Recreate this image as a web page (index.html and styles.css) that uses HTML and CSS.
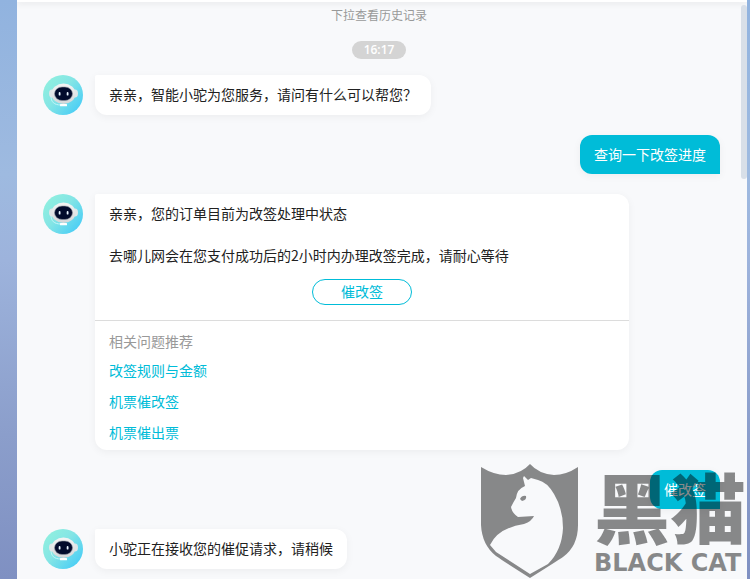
FILE: index.html
```
<!DOCTYPE html>
<html lang="zh-CN">
<head>
  <meta charset="UTF-8">
  <meta name="viewport" content="width=device-width, initial-scale=1.0">
  <title>智能小驼</title>
  <link rel="stylesheet" href="styles.css">
</head>
<body>
  <!-- Shared robot avatar -->
  <svg class="defs" width="0" height="0" aria-hidden="true">
    <defs>
      <linearGradient id="avatarBg" x1="0.1" y1="0.2" x2="0.9" y2="0.9">
        <stop offset="0" stop-color="#8eeee0"/>
        <stop offset="0.4" stop-color="#84e5e5"/>
        <stop offset="1" stop-color="#48cdf6"/>
      </linearGradient>
      <linearGradient id="helmet" x1="0" y1="0" x2="0" y2="1">
        <stop offset="0" stop-color="#f4f4f4"/>
        <stop offset="1" stop-color="#d3d6d8"/>
      </linearGradient>
      <symbol id="robot" viewBox="0 0 40 40">
        <circle cx="20" cy="20" r="20" fill="url(#avatarBg)"/>
        <path d="M8 21c0 6 3 9 10 9" fill="none" stroke="#c4f5f8" stroke-width="1"/>
        <ellipse cx="9" cy="18.500" rx="3" ry="4" fill="#dfe6e8"/>
        <ellipse cx="32" cy="18.500" rx="3" ry="4" fill="#dfe6e8"/>
        <ellipse cx="20.500" cy="18.800" rx="12" ry="10.200" fill="url(#helmet)"/>
        <rect x="11.500" y="12" width="18" height="13.500" rx="7.500" ry="6.700" fill="#020b2c" stroke="#8d939f" stroke-width="0.600"/>
        <rect x="15.700" y="17" width="1.800" height="3.600" rx="0.900" fill="#e8f4ff"/>
        <rect x="23.700" y="17" width="1.800" height="3.600" rx="0.900" fill="#e8f4ff"/>
        <rect x="17" y="29" width="7" height="2.200" rx="0.500" fill="#fff"/>
      </symbol>
    </defs>
  </svg>

  <main class="chat">
    <div class="chat-header"></div>
    <div class="scrollbar"></div>

    <div class="messages">
      <div class="history">下拉查看历史记录</div>
      <time class="time">16:17</time>

      <div class="row">
        <svg class="avatar"><use href="#robot"/></svg>
        <div class="bubble">亲亲，智能小驼为您服务，请问有什么可以帮您？</div>
      </div>

      <div class="row mine">
        <div class="bubble">查询一下改签进度</div>
      </div>

      <div class="row">
        <svg class="avatar"><use href="#robot"/></svg>
        <div class="card">
          <div class="card-body">
            <p>亲亲，您的订单目前为改签处理中状态</p>
            <p>去哪儿网会在您支付成功后的2小时内办理改签完成，请耐心等待</p>
            <button class="urge" type="button">催改签</button>
          </div>
          <div class="related">
            <div class="related-title">相关问题推荐</div>
            <a href="#">改签规则与金额</a>
            <a href="#">机票催改签</a>
            <a href="#">机票催出票</a>
          </div>
        </div>
      </div>

      <div class="row mine">
        <div class="bubble">催改签</div>
      </div>

      <div class="row">
        <svg class="avatar"><use href="#robot"/></svg>
        <div class="bubble">小驼正在接收您的催促请求，请稍候</div>
      </div>
    </div>

    <!-- Watermark -->
    <div class="watermark">
      <svg class="shield" viewBox="0 0 98 116">
        <path fill-rule="evenodd" d="M0 4Q13 12 25 12Q40 11 49 1Q58 11 73 12Q85 12 97 4V62Q97 83 82 94Q76 98 49 115Q22 98 15 93Q1 82 0 62Z
          M9 82L15 89L49 111L67 101Q81 87 82 65Q82 46 73 31Q66 19 57 17L50 15L47 17L43 13L42 15L44 23Q36 26 35 35Q33 38 30 44Q31 50 37 54L53 53Q51 58 43 61Q17 65 9 82Z"/>
        <path d="M39 36Q41 32 45 33Q46 37 41 38Z"/>
      </svg>
      <div class="brand">
        <div class="brand-cn">黑猫</div>
        <div class="brand-en">BLACK CAT</div>
      </div>
    </div>
  </main>
</body>
</html>
```

FILE: styles.css
```
* {
  box-sizing: border-box;
}

body {
  margin: 0;
  height: 100vh;
  padding: 0 3px 0 17px;
  overflow: hidden;
  font-family: "Noto Sans CJK SC", sans-serif;
  font-size: 14px;
  line-height: 20px;
  color: #212121;
  background: linear-gradient(#91b3df, #9ebae0 30%, #9db3dc 45%, #8b9ecb 75%, #7f90c2);
}

.defs {
  position: absolute;
}

.chat {
  position: relative;
  height: 100%;
  overflow: hidden;
  background: #f8f9fb;
}

.chat-header {
  height: 2px;
  background: #fff;
  box-shadow: 0 1px 6px rgba(0, 0, 0, 0.15);
}

.scrollbar {
  position: absolute;
  top: 5px;
  right: 0;
  width: 6px;
  height: 174px;
  border-radius: 3px;
  background: #d8dfe8;
}

.messages {
  display: flex;
  flex-direction: column;
  gap: 20px;
  padding: 3px 27px 10px 26px;
}

.history,
.time {
  align-self: center;
  margin-right: 5px;
  font-size: 12px;
}

.history {
  color: #999;
}

.time {
  margin-top: -4px;
  margin-bottom: -4px;
  padding: 0 12px;
  border-radius: 9px;
  font-family: "Open Sans", sans-serif;
  font-weight: 600;
  line-height: 18px;
  color: #fff;
  background: #d4d4d4;
}

.row {
  display: flex;
  align-items: flex-start;
  gap: 12px;
}

.avatar {
  flex: none;
  width: 40px;
  height: 40px;
}

.bubble {
  padding: 9px 14px 11px;
  border-radius: 2px 12px 12px 12px;
  background: #fff;
  box-shadow: 0 2px 8px rgba(0, 0, 0, 0.05);
}

.mine {
  justify-content: flex-end;
}

.mine .bubble {
  padding: 10px 14px;
  border-radius: 12px 12px 0 12px;
  line-height: 19px;
  color: #fff;
  background: #00bcd8;
}

.card {
  flex: 1;
  margin-right: 91px;
  border-radius: 2px 12px 12px 12px;
  line-height: 21px;
  background: #fff;
  box-shadow: 0 2px 8px rgba(0, 0, 0, 0.05);
}

.card-body {
  display: flex;
  flex-direction: column;
  padding: 9px 14px 15px;
  border-bottom: 1px solid #dcdcdc;
}

.card-body p {
  margin: 0;
}

.card-body p + p {
  margin-top: 21px;
}

.urge {
  align-self: center;
  width: 100px;
  height: 26px;
  margin-top: 13px;
  padding: 0 0 2px;
  border: 1px solid #00bcd8;
  border-radius: 13px;
  font: inherit;
  color: #00bcd8;
  background: #fff;
  cursor: pointer;
}

.related {
  display: flex;
  flex-direction: column;
  align-items: flex-start;
  padding: 10px 14px 2px;
}

.related-title {
  margin-bottom: 3px;
  color: #999;
}

.related a {
  padding: 5px 0;
  color: #00bcd8;
  text-decoration: none;
}

.watermark {
  position: absolute;
  right: 0;
  bottom: 0;
  display: flex;
  width: 266px;
  height: 116px;
  gap: 15px;
  color: #000;
  opacity: 0.45;
  pointer-events: none;
}

.shield {
  flex: none;
  width: 98px;
  height: 116px;
  fill: currentColor;
}

.brand {
  white-space: nowrap;
}

.brand-cn {
  margin-top: 4px;
  font-size: 76px;
  font-weight: 900;
  line-height: 76px;
}

.brand-en {
  margin-top: 6px;
  font-family: "DejaVu Sans", sans-serif;
  font-size: 24px;
  font-weight: 700;
  line-height: 28px;
}
```
